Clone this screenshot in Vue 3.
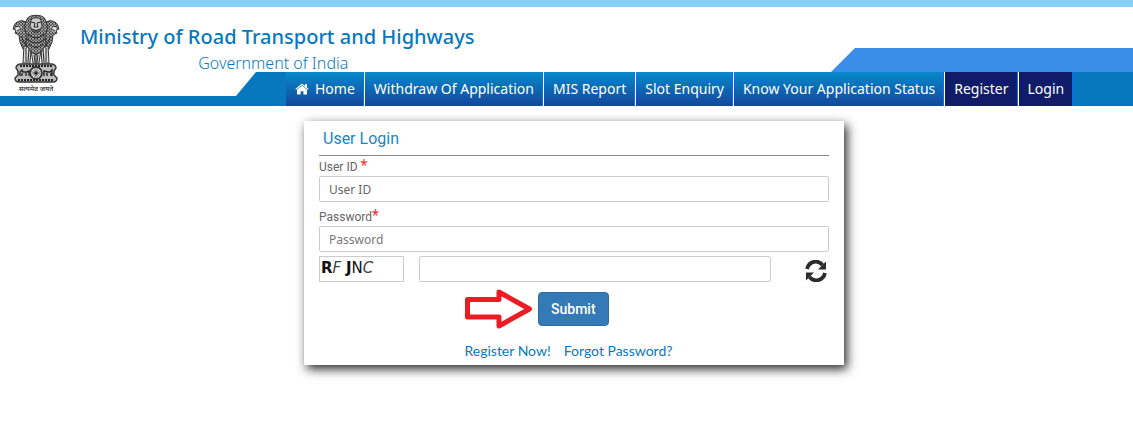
<script setup>
  import { ref } from 'vue'

  const menu = [
    { label: 'Home', icon: true },
    { label: 'Withdraw Of Application' },
    { label: 'MIS Report' },
    { label: 'Slot Enquiry' },
    { label: 'Know Your Application Status' },
    { label: 'Register', dark: true },
    { label: 'Login', dark: true },
  ]

  const userId = ref('')
  const password = ref('')
  const captcha = ref('')
</script>

<template>
  <header class="header">
    <div class="emblem">
      <svg width="48" height="70" viewBox="0 0 48 70" role="img" aria-label="Emblem of India">
        <defs>
          <pattern id="curls" width="3" height="3" patternUnits="userSpaceOnUse">
            <rect width="3" height="3" fill="#aaa" />
            <path d="M0 2.6Q1.5 0 3 2.6M1.5 0v1" stroke="#222" stroke-width=".9" fill="none" />
          </pattern>
        </defs>
        <g stroke="#333" stroke-width="1" stroke-linejoin="round">
          <path d="M14 8C9 5 3 8 2 12l-1 3 3 1-1 3 4 2 1 7 3 7 8 3h10l8-3 3-7 1-7 4-2-1-3 3-1-1-3c-1-4-7-7-12-4z" fill="url(#curls)" />
          <path d="M12 32l-1 17h7l1-13 2 13h6l2-13 1 13h7l-1-17z" fill="#ddd" />
          <path d="M15 5c2-5 16-5 18 0l3 8-3 9 1 8-5 8-5 3-5-3-5-8 1-8-3-9z" fill="url(#curls)" />
          <path d="M19 6c2-3 8-3 10 0l1 6-3 6h-6l-3-6z" fill="#ccc" />
        </g>
        <path d="M3 14l3-3 4 2-2 4-3 1zM45 14l-3-3-4 2 2 4 3 1z" fill="#ddd" />
        <g fill="none" stroke="#222" stroke-width="1">
          <path d="M19 8l4 1M29 8l-4 1M23 9l-1 4h4l-1-4M20 15q4 3 8 0M21 17h6M3 13l4-1 2 3-4 2M45 13l-4-1-2 3 4 2" />
          <path d="M16 20q8 8 16 0M15 25q9 8 18 0M17 30q7 7 14 0M9 22l6 12M39 22l-6 12" />
          <path d="M14 34v14M17 35l-1 13M22 41l1 7M24 39v10M26 41l-1 7M31 35l1 13M34 34v14" />
        </g>
        <path d="M8 50h32q4 1 4 4l-2 3v4l3 3q0 4-4 4H7q-4 0-4-4l3-3v-4l-2-3q0-3 4-4z" fill="#bbb" stroke="#333" stroke-width="1.4" />
        <path d="M8 52h32M6 66h36" stroke="#222" stroke-width="2" stroke-dasharray="2 1" />
        <circle cx="24" cy="59" r="6" fill="#eee" stroke="#222" stroke-width="1.5" />
        <path d="M24 53v12M18 59h12M20 55l8 8M28 55l-8 8M22 53l4 12M26 53l-4 12M18 57l12 4M18 61l12-4" stroke="#444" stroke-width=".6" />
        <circle cx="24" cy="59" r="1.5" fill="#222" />
        <path d="M8 62v-4l2-2 1 2h4l2-1v5M10 59v3M14 59v3M32 62v-5l4 1h2l2-2v6M35 59v3M39 59v3" fill="none" stroke="#222" stroke-width="1.4" />
      </svg>
      <span class="motto">सत्यमेव जयते</span>
    </div>
    <div class="titles">
      <h1>Ministry of Road Transport and Highways</h1>
      <p>Government of India</p>
    </div>
    <div class="ribbon"></div>
    <nav class="nav">
      <a v-for="item in menu" :key="item.label" href="#" class="nav-item" :class="{ dark: item.dark }">
        <svg v-if="item.icon" width="14" height="12" viewBox="0 0 14 12" aria-hidden="true">
          <path d="M7 2.6L2 6.8V11q0 .6.6.6h3V8.2h2.8v3.4h3q.6 0 .6-.6V6.8z" fill="#fff" />
          <path d="M13.7 6L12 4.5V1h-2v1.9L7.7 1Q7 .4 6.3 1L.3 6l.7.8L7 1.9l6 4.9z" fill="#fff" />
        </svg>
        {{ item.label }}
      </a>
    </nav>
  </header>

  <main class="main">
    <form class="card" @submit.prevent>
      <h2>User Login</h2>
      <div class="field">
        <label for="user-id">User ID <span class="star">*</span></label>
        <input id="user-id" v-model="userId" class="dark-hint" type="text" placeholder="User ID" />
      </div>
      <div class="field">
        <label for="password">Password<span class="star">*</span></label>
        <input id="password" v-model="password" type="password" placeholder="Password" />
      </div>
      <div class="captcha-row">
        <div class="captcha"><b>R</b><i>F</i> <b>J</b><span>N</span><i>C</i></div>
        <input v-model="captcha" type="text" aria-label="Captcha" />
        <button class="refresh" type="button" aria-label="Refresh captcha">
          <svg width="22" height="22" viewBox="0 0 22 22">
            <path d="M2 9C4 1 13-.5 17.500 5M20 13C18 21 9 22.500 4.500 17" fill="none" stroke="#2b2b2b" stroke-width="3.800" />
            <path d="M21 1.500V9.500H13zM1 20.500V12.500H9z" fill="#2b2b2b" />
          </svg>
        </button>
      </div>
      <div class="submit-row">
        <svg width="68" height="40" viewBox="0 0 68 40" aria-hidden="true">
          <path d="M2.500 10.500H34V3L64.500 20 34 37V28H2.500z" fill="#fff" stroke="#ed1c24" stroke-width="5" stroke-linejoin="round" />
        </svg>
        <button class="submit" type="submit">Submit</button>
      </div>
      <div class="links">
        <a href="#">Register Now!</a>
        <a href="#">Forgot Password?</a>
      </div>
    </form>
  </main>
</template>

<style>
  body {
    margin: 0;
    background: #fff;
  }
</style>

<style scoped>
  * {
    box-sizing: border-box;
  }

  a {
    text-decoration: none;
  }

  .header {
    display: grid;
    grid-template-columns: 72px 1fr 302px;
    grid-template-rows: 65px 34px;
    border-top: 7px solid #87cefa;
    font-family: "Noto Sans", sans-serif;
  }

  .emblem {
    grid-area: 1 / 1 / 3 / 2;
    z-index: 1;
    display: flex;
    flex-direction: column;
    align-items: center;
    align-self: start;
    padding-top: 7px;
  }

  .motto {
    font-size: 7px;
    line-height: 10px;
    font-weight: 500;
    color: #222;
    white-space: nowrap;
  }

  .titles {
    grid-area: 1 / 2;
    justify-self: start;
    padding: 16px 0 0 8px;
    text-align: center;
    color: #0878be;
    white-space: nowrap;
  }

  h1 {
    margin: 0;
    font-size: 20px;
    line-height: 28px;
    font-weight: 500;
  }

  .titles p {
    margin: 0;
    padding-right: 8px;
    font-size: 16px;
    line-height: 24px;
    font-weight: 350;
  }

  .ribbon {
    grid-area: 1 / 3;
    align-self: end;
    height: 24px;
    background: #3a8ee8;
    clip-path: polygon(24px 0, 100% 0, 100% 100%, 0 100%);
  }

  .nav {
    grid-area: 2 / 1 / 3 / 4;
    display: flex;
    padding-left: 286px;
    background: #0777be;
    clip-path: polygon(0 24px, 236px 24px, 256px 0, 100% 0, 100% 100%, 0 100%);
  }

  .nav-item {
    display: flex;
    align-items: center;
    gap: 6px;
    padding: 0 8px 0 9px;
    border-right: 1px solid #0a6cff;
    background: linear-gradient(#068acb, #14469c);
    color: #fff;
    font-size: 14px;
    line-height: 34px;
    white-space: nowrap;
  }

  .nav-item + .nav-item {
    border-left: 1px solid #fff;
  }

  .nav-item.dark {
    background: #111c68;
  }

  .main {
    display: flex;
    justify-content: center;
    padding: 15px 0 24px 15px;
    font-family: Roboto, sans-serif;
  }

  .card {
    width: 100%;
    max-width: 540px;
    padding: 0 15px 4px;
    background: #fff;
    box-shadow: 3px 4px 10px rgba(0, 0, 0, 0.85);
  }

  h2 {
    margin: 0;
    padding: 1px 4px 0;
    border-bottom: 1px solid #888;
    color: #1a85c8;
    font-size: 16px;
    line-height: 33px;
    font-weight: 400;
  }

  .field {
    display: flex;
    flex-direction: column;
    margin-bottom: 4px;
  }

  label {
    padding-top: 2px;
    color: #666;
    font-size: 12px;
    line-height: 18px;
  }

  .star {
    color: #f33;
    font-size: 16px;
    line-height: 16px;
  }

  input {
    width: 100%;
    height: 26px;
    padding: 0 9px;
    border: 1px solid #ccc;
    border-radius: 2px;
    background: #fff;
    color: #555;
    font-family: "Noto Sans", sans-serif;
    font-size: 12px;
  }

  input::placeholder {
    color: #777;
    opacity: 1;
  }

  .dark-hint::placeholder {
    color: #666;
  }

  .captcha-row {
    display: flex;
    align-items: center;
  }

  .captcha {
    flex: none;
    width: 85px;
    height: 26px;
    margin-right: 15px;
    padding-left: 1px;
    border: 1px solid #ccc;
    color: #111;
    font-family: "DejaVu Sans", sans-serif;
    font-size: 15px;
    line-height: 22px;
  }

  .captcha i {
    color: #444;
  }

  .captcha-row input {
    flex: 1;
  }

  .refresh {
    display: flex;
    margin: 0 2px 0 34px;
    padding: 4px 0 0;
    border: 0;
    background: none;
  }

  .submit-row {
    display: flex;
    align-items: center;
    gap: 5px;
    margin-top: 7px;
    padding-left: 146px;
  }

  .submit {
    height: 34px;
    padding: 0 12px;
    border: 1px solid #2e6da4;
    border-radius: 4px;
    background: #337ab7;
    color: #fff;
    font-family: Roboto, sans-serif;
    font-size: 14px;
    font-weight: 500;
  }

  .links {
    display: flex;
    justify-content: center;
    gap: 13px;
    margin-top: 12px;
    padding-right: 11px;
    font-family: Lato, sans-serif;
    font-size: 14px;
    line-height: 20px;
  }

  .links a {
    color: #0878be;
  }
</style>
